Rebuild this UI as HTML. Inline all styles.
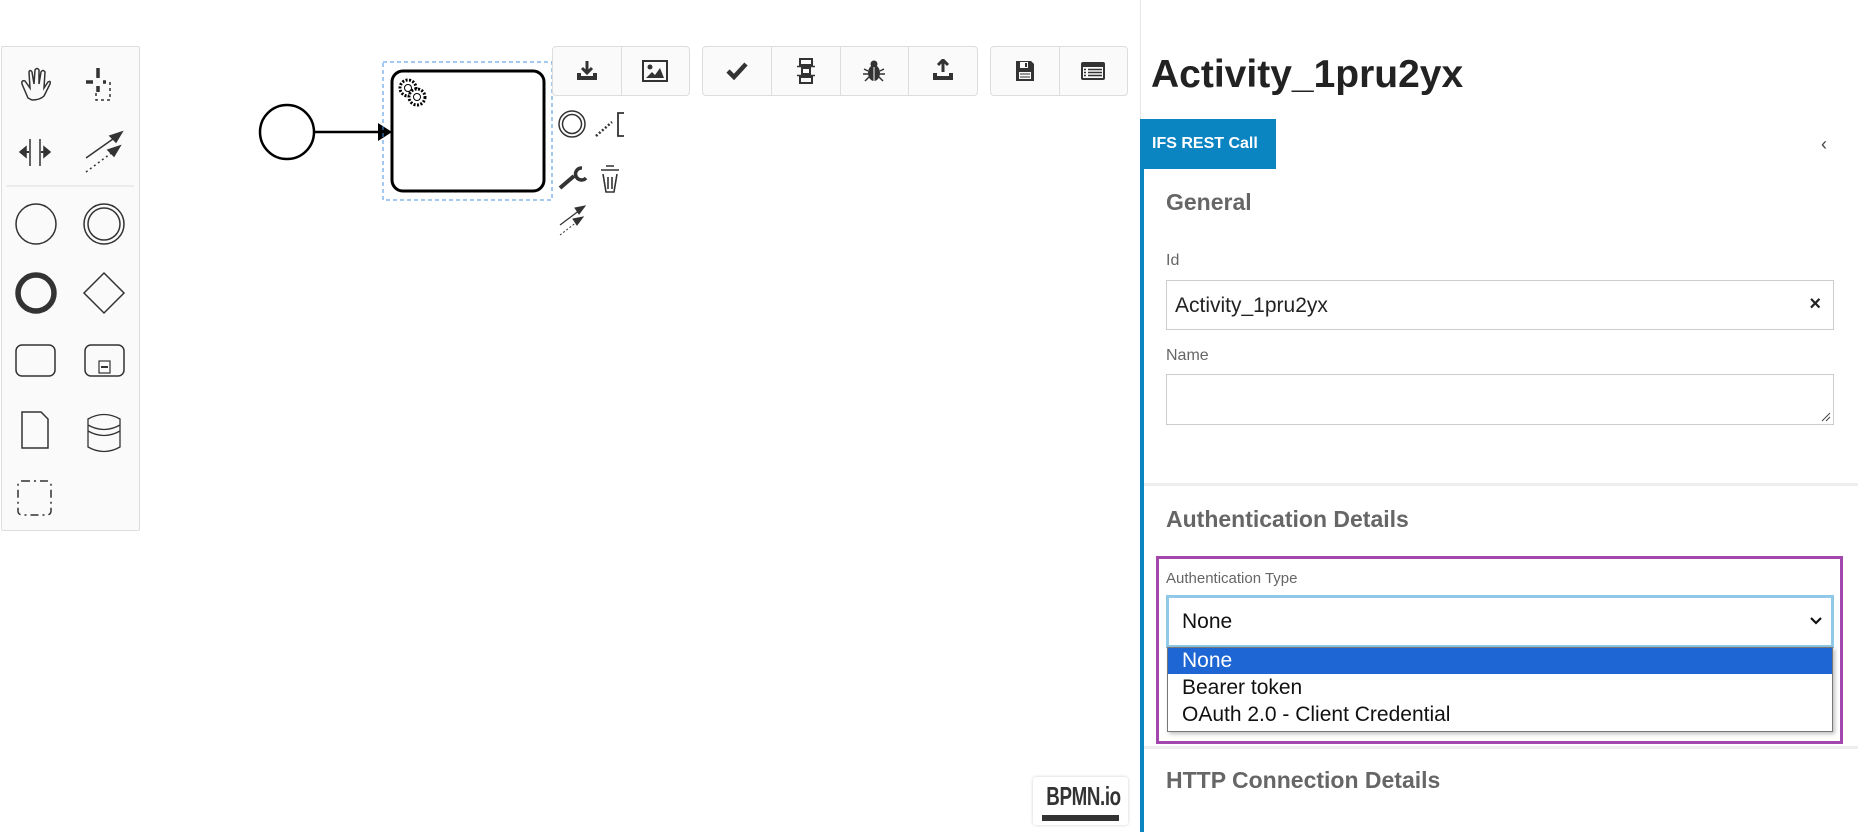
<!DOCTYPE html>
<html><head><meta charset="utf-8">
<style>
*{box-sizing:border-box;margin:0;padding:0}
body{width:1858px;height:832px;overflow:hidden;background:#fff;font-family:"Liberation Sans",Arial,sans-serif;position:relative}
.abs{position:absolute}
.pal{left:1px;top:46px;width:139px;height:485px;background:#fafafa;border:1px solid #ddd;border-radius:2px}
.tb{top:46px;height:50px;background:#fafafa;border:1px solid #ddd;border-radius:4px;display:flex}
.tb div{flex:1;border-right:1px solid #ddd;display:flex;align-items:center;justify-content:center}
.tb div:last-child{border-right:none}
.panel{left:1140px;top:0;width:718px;height:832px;background:#fff;border-left:1px solid #e6e6e6}
h1{position:absolute;left:1151px;top:53px;font-size:39px;font-weight:bold;color:#222}
.tab{left:1140px;top:119px;width:136px;height:50px;background:#0b84c2;color:#fff;font-weight:bold;font-size:16px;line-height:50px;padding-left:12px}
.bl{left:1140px;top:169px;width:4px;height:663px;background:#0b84c2}
h2{position:absolute;font-size:23px;font-weight:bold;color:#666}
.lbl{position:absolute;font-size:16px;color:#666}
.inp{position:absolute;border:1px solid #ccc;background:#fff}
.sep{position:absolute;left:1144px;width:714px;height:3px;background:#eee}
</style></head><body>
<div class="abs pal"></div>
<svg class="abs" style="left:0;top:0" width="1140" height="832">
<g fill="none" stroke="#333" stroke-width="1.5">
<path d="M28 98 L22 84 Q21 80 25 81 L30 88 L29 72 Q30 69 32 72 L34 84 L35 70 Q37 67 39 70 L39 84 L41 72 Q43 69 45 72 L44 88 L48 82 Q51 80 50 84 L44 96 Q40 100 32 100 Z"/>
<path d="M98 68 V78 M98 86 V92 M86 82 H93 M103 82 H106" stroke-width="3.5"/>
<path d="M110 82 V100 H96 V92" stroke-dasharray="3 3"/>
<path d="M30 139 V166 M40 139 V166"/>
<path d="M22 152 H29 M41 152 H48" stroke-width="2"/>
<path d="M20 152 l6 -5 v10 Z M50 152 l-6 -5 v10 Z" fill="#333"/>
<path d="M86 158 L120 134" stroke-width="1.5"/>
<path d="M122 132 l-12 4 l6 6 Z" fill="#333"/>
<path d="M86 172 L118 148" stroke-dasharray="2 3"/>
<path d="M120 146 l-12 4 l6 6 Z" fill="#333"/>
</g>
<path d="M6 186 H134" stroke="#ddd"/>
<g fill="none" stroke="#333">
<circle cx="36" cy="224" r="20" stroke-width="1.5"/>
<circle cx="104" cy="224" r="20" stroke-width="1.5"/><circle cx="104" cy="224" r="16" stroke-width="1.5"/>
<circle cx="36" cy="293" r="18" stroke-width="5.5"/>
<path d="M104 273 L124 293 L104 313 L84 293 Z" stroke-width="1.5"/>
<rect x="16" y="345" width="39" height="31" rx="6" stroke-width="1.5"/>
<rect x="85" y="345" width="39" height="31" rx="6" stroke-width="1.5"/>
<rect x="99" y="361" width="11" height="12" stroke-width="1.2"/><path d="M101 367 H108" stroke-width="2"/>
<path d="M22 412 H41 L48 419 V448 H22 Z" stroke-width="1.5"/>
<path d="M88 419 Q104 410 120 419 V447 Q104 456 88 447 Z M88 425 Q104 434 120 425 M88 431 Q104 440 120 431" stroke-width="1.3"/>
<rect x="18" y="481" width="33" height="34" rx="4" stroke-width="1.5" stroke-dasharray="8 4 2 4"/>
</g>
<circle cx="287" cy="132" r="27" fill="#fff" stroke="#000" stroke-width="2.5"/>
<path d="M314 132 H384" stroke="#000" stroke-width="2.5"/>
<path d="M392 132 L378 123 V141 Z" fill="#000"/>
<rect x="383" y="62" width="169" height="138" fill="none" stroke="#4a90e2" stroke-width="1" stroke-dasharray="4 3"/>
<rect x="392" y="71" width="152" height="120" rx="11" fill="#fff" stroke="#000" stroke-width="3"/>
<g fill="#fff" stroke="#000" stroke-width="1">
<circle cx="408" cy="88" r="8" stroke-dasharray="2 1.5" stroke-width="3"/>
<circle cx="408" cy="88" r="3.5"/>
<circle cx="417" cy="97" r="8" stroke-dasharray="2 1.5" stroke-width="3"/>
<circle cx="417" cy="97" r="6" fill="#fff" stroke="none"/>
<circle cx="417" cy="97" r="3.5"/>
</g>
<g fill="none" stroke="#333">
<circle cx="572" cy="124" r="13" stroke-width="1.5"/><circle cx="572" cy="124" r="9.5" stroke-width="1.5"/>
<path d="M596 136 L612 122" stroke-dasharray="2 2" stroke-width="2.5"/>
<path d="M624 113 H618 V136 H624" stroke-width="1.8"/>
<path d="M560 188 L574 176" stroke-width="4"/>
<path d="M582 168 a6 6 0 1 0 4 10" stroke-width="3.5"/>
<path d="M601 170 H619 M606 166 H614 M603 174 L606 192 H614 L617 174 M608 177 V189 M612 177 V189" stroke-width="1.6"/>
<path d="M560 225 L584 207" stroke-width="1.3"/><path d="M585 206 l-10 2 l4 6Z" fill="#333"/>
<path d="M560 235 L582 218" stroke-dasharray="2 2"/><path d="M583 217 l-10 2 l4 6Z" fill="#333"/>
</g>
</svg>
<div class="abs tb" style="left:552px;width:138px">
<div><svg width="24" height="24"><path d="M12 2 V13 M7 9 L12 14 L17 9" stroke="#333" stroke-width="3" fill="none"/><path d="M2 14 V21 H22 V14 H18 V17 H6 V14 Z" fill="#333"/></svg></div>
<div><svg width="26" height="22"><rect x="1" y="1" width="24" height="20" fill="none" stroke="#333" stroke-width="2"/><circle cx="8" cy="7" r="2.5" fill="#333"/><path d="M4 18 L10 12 L13 15 L18 8 L22 18 Z" fill="#333"/></svg></div>
</div>
<div class="abs tb" style="left:702px;width:276px">
<div><svg width="22" height="20"><path d="M2 10 L8 16 L20 3" stroke="#333" stroke-width="4.5" fill="none"/></svg></div>
<div><svg width="20" height="26"><rect x="4" y="1" width="12" height="6" fill="none" stroke="#333" stroke-width="2"/><rect x="6" y="10" width="8" height="6" fill="none" stroke="#333" stroke-width="2"/><rect x="4" y="19" width="12" height="6" fill="none" stroke="#333" stroke-width="2"/><path d="M1 8.5 H19 M1 17.5 H19" stroke="#333" stroke-width="1.5"/></svg></div>
<div><svg width="24" height="24"><ellipse cx="12" cy="14" rx="6" ry="8" fill="#333"/><circle cx="12" cy="5" r="3.5" fill="#333"/><path d="M2 10 L6 12 M22 10 L18 12 M1 15 H6 M23 15 H18 M3 22 L7 18 M21 22 L17 18" stroke="#333" stroke-width="1.5"/><path d="M12 8 V22" stroke="#fafafa" stroke-width="1"/></svg></div>
<div><svg width="24" height="24"><path d="M12 1 V13 M7 6 L12 1 L17 6" stroke="#333" stroke-width="3" fill="none"/><path d="M2 14 V21 H22 V14 H18 V17 H6 V14 Z" fill="#333"/></svg></div>
</div>
<div class="abs tb" style="left:990px;width:138px">
<div><svg width="20" height="22"><path d="M1 1 H16 L19 4 V21 H1 Z" fill="#333"/><rect x="5" y="2" width="8" height="6" fill="#fafafa"/><rect x="10" y="3" width="2" height="4" fill="#333"/><rect x="4" y="12" width="12" height="7" fill="#fafafa"/><path d="M5 14 H15 M5 17 H15" stroke="#333"/></svg></div>
<div><svg width="26" height="20"><rect x="1" y="1" width="24" height="18" rx="2" fill="#333"/><rect x="3" y="6" width="20" height="11" fill="#fafafa"/><path d="M4 8.5 H6 M8 8.5 H22 M4 11.5 H6 M8 11.5 H22 M4 14.5 H6 M8 14.5 H22" stroke="#333" stroke-width="1.5"/></svg></div>
</div>
<div class="abs" style="left:1033px;top:777px;width:95px;height:48px;background:#fff;border-radius:3px;box-shadow:0 0 3px rgba(0,0,0,.2);overflow:hidden">
<div style="position:absolute;left:0;width:95px;top:3px;text-align:center;font-family:'Liberation Sans',sans-serif;font-weight:bold;font-size:26px;color:#333;line-height:32px;transform:scaleX(0.72);transform-origin:center;letter-spacing:-0.5px">BPMN.io</div>
<div style="position:absolute;left:9px;right:9px;top:38px;height:6px;background:#333"></div>
</div>
<div class="abs panel"></div>
<h1>Activity_1pru2yx</h1>
<div class="abs tab">IFS REST Call</div>
<div class="abs" style="left:1821px;top:134px;font-size:18px;color:#444">‹</div>
<div class="abs bl"></div>
<h2 style="left:1166px;top:189px">General</h2>
<div class="lbl" style="left:1166px;top:252px">Id</div>
<div class="inp" style="left:1166px;top:280px;width:668px;height:50px"><span style="position:absolute;left:8px;top:13px;font-size:21px;color:#222">Activity_1pru2yx</span><span style="position:absolute;right:12px;top:12px;font-size:20px;font-weight:bold;color:#222">×</span></div>
<div class="lbl" style="left:1166px;top:347px">Name</div>
<div class="inp" style="left:1166px;top:374px;width:668px;height:51px"><svg style="position:absolute;right:2px;bottom:2px" width="10" height="10"><path d="M1 9 L9 1 M5 9 L9 5" stroke="#444"/></svg></div>
<div class="sep" style="top:483px"></div>
<h2 style="left:1166px;top:506px">Authentication Details</h2>
<div class="abs" style="left:1156px;top:556px;width:687px;height:188px;border:3px solid #a347ad"></div>
<div class="lbl" style="left:1166px;top:570px;font-size:15px">Authentication Type</div>
<div class="abs" style="left:1166px;top:595px;width:668px;height:53px;border:3px solid #90c8e8;background:#fff"><span style="position:absolute;left:13px;top:12px;font-size:21px;color:#111">None</span><svg style="position:absolute;right:8px;top:18px" width="14" height="10"><path d="M2 2 L7 7 L12 2" stroke="#111" stroke-width="2.2" fill="none"/></svg></div>
<div class="abs" style="left:1167px;top:647px;width:666px;height:85px;background:#fff;border:1px solid #777;box-shadow:2px 2px 4px rgba(0,0,0,.25);font-size:21px;color:#111">
<div style="background:#1d66d4;color:#fff;height:26px;line-height:26px;padding-left:14px">None</div>
<div style="height:27px;line-height:27px;padding-left:14px">Bearer token</div>
<div style="height:27px;line-height:27px;padding-left:14px">OAuth 2.0 - Client Credential</div>
</div>
<div class="sep" style="top:746px"></div>
<h2 style="left:1166px;top:767px">HTTP Connection Details</h2>
</body></html>
